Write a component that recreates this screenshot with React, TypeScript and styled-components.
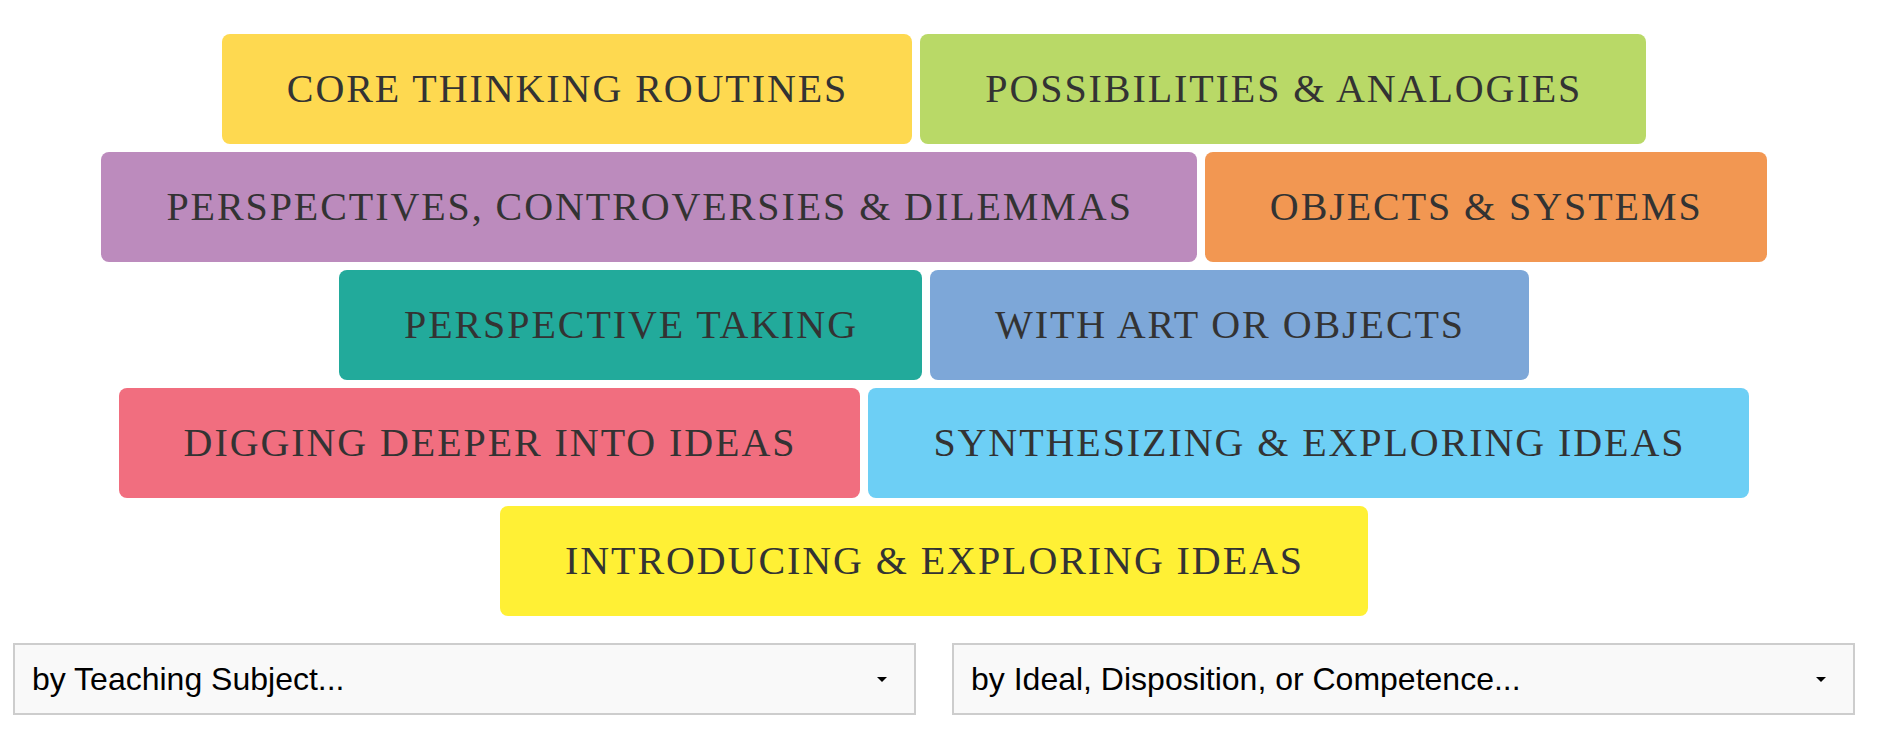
import styled, { createGlobalStyle } from 'styled-components';

const GlobalStyle = createGlobalStyle`
  html, body {
    margin: 0;
    padding: 0;
    background: #fff;
  }
`;

type Category = { label: string; color: string };

const categories: Category[] = [
  { label: 'Core Thinking Routines', color: '#fed950' },
  { label: 'Possibilities & Analogies', color: '#b9d967' },
  { label: 'Perspectives, Controversies & Dilemmas', color: '#bc8bbd' },
  { label: 'Objects & Systems', color: '#f29752' },
  { label: 'Perspective Taking', color: '#22aa9b' },
  { label: 'With Art or Objects', color: '#7da7d8' },
  { label: 'Digging Deeper into Ideas', color: '#f16e7f' },
  { label: 'Synthesizing & Exploring Ideas', color: '#6dcff5' },
  { label: 'Introducing & Exploring Ideas', color: '#fff035' },
];

const filters = ['by Teaching Subject...', 'by Ideal, Disposition, or Competence...'];

const App = () => {
  return (
    <Page>
      <GlobalStyle />
      <Tiles>
        {categories.map((c) => (
          <Tile key={c.label} href="#" $bg={c.color}>
            {c.label}
          </Tile>
        ))}
      </Tiles>
      <Filters>
        {filters.map((f) => (
          <Dropdown key={f} role="combobox" tabIndex={0}>
            <span>{f}</span>
            <Caret />
          </Dropdown>
        ))}
      </Filters>
    </Page>
  );
};

const Page = styled.div`
  width: 1868px;
`;

/* colour tiles, wrapped and centred */
const Tiles = styled.nav`
  display: flex;
  flex-wrap: wrap;
  justify-content: center;
  gap: 8px;
  padding-top: 34px;
`;

const Tile = styled.a<{ $bg: string }>`
  display: flex;
  align-items: center;
  box-sizing: border-box;
  height: 110px;
  padding: 0 64px 2px 65px;
  border-radius: 8px;
  background: ${(p) => p.$bg};
  color: #333;
  text-decoration: none;
  text-transform: uppercase;
  font-family: 'Liberation Serif', 'Times New Roman', serif;
  font-size: 40px;
  letter-spacing: 0.048em;
  white-space: nowrap;
`;

const Filters = styled.div`
  display: grid;
  grid-template-columns: 1fr 1fr;
  gap: 36px;
  padding: 0 13px;
  margin-top: 27px;
`;

const Dropdown = styled.div`
  display: flex;
  align-items: center;
  justify-content: space-between;
  box-sizing: border-box;
  height: 72px;
  padding: 0 27px 0 17px;
  border: 2px solid #cdcdcd;
  background: #f9f9f9;
  color: #000;
  font-family: 'Liberation Sans', Arial, sans-serif;
  font-size: 32px;
  cursor: pointer;
`;

const Caret = styled.span`
  width: 0;
  height: 0;
  border-left: 5px solid transparent;
  border-right: 5px solid transparent;
  border-top: 5px solid #000;
`;

export default App;
